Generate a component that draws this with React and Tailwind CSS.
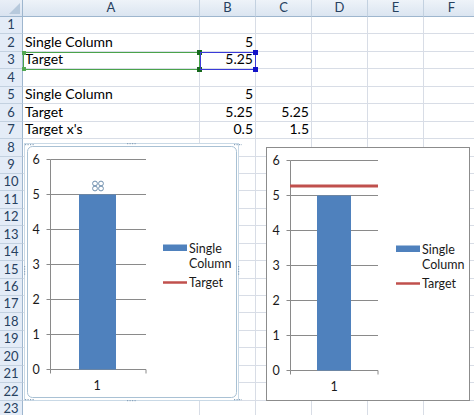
const cols = [
  { key: 'A', w: 177 },
  { key: 'B', w: 56 },
  { key: 'C', w: 56 },
  { key: 'D', w: 56 },
  { key: 'E', w: 56 },
  { key: 'F', w: 56 },
];

const data = {
  2: { A: 'Single Column', B: '5' },
  3: { A: 'Target', B: '5.25' },
  5: { A: 'Single Column', B: '5' },
  6: { A: 'Target', B: '5.25', C: '5.25' },
  7: { A: "Target x's", B: '0.5', C: '1.5' },
};

const rows = Array.from({ length: 23 }, (_, i) => i + 1);

function Axis({ x0, x1, y0, step, labelX }) {
  const ys = [0, 1, 2, 3, 4, 5, 6].map((v) => ({ v, y: y0 - v * step }));
  return (
    <g>
      {ys.map(({ v, y }) => (
        <g key={v}>
          {v > 0 && <line x1={x0} x2={x1} y1={y} y2={y} stroke="#8a8a8a" strokeWidth="1" />}
          <line x1={x0 - 4} x2={x0} y1={y} y2={y} stroke="#8a8a8a" strokeWidth="1" />
          <text x={labelX} y={y + 4.5} textAnchor="middle" fontSize="12.5" fill="#1a1a1a">{v}</text>
        </g>
      ))}
      <line x1={x0} x2={x0} y1={y0 - 6 * step} y2={y0} stroke="#8a8a8a" strokeWidth="1" />
      <line x1={x0} x2={x1} y1={y0} y2={y0} stroke="#8a8a8a" strokeWidth="1" />
      <line x1={x0} x2={x0} y1={y0} y2={y0 + 4} stroke="#8a8a8a" strokeWidth="1" />
      <line x1={x1} x2={x1} y1={y0} y2={y0 + 4} stroke="#8a8a8a" strokeWidth="1" />
    </g>
  );
}

function Legend({ x, y }) {
  return (
    <g fontSize="12.5" fill="#1a1a1a">
      <rect x={x} y={y} width="24" height="6.5" fill="#4f81bd" />
      <text x={x + 26} y={y + 8}>Single</text>
      <text x={x + 26} y={y + 23}>Column</text>
      <line x1={x} x2={x + 24} y1={y + 38} y2={y + 38} stroke="#c0504d" strokeWidth="2.5" />
      <text x={x + 26} y={y + 42.5}>Target</text>
    </g>
  );
}

function Dots({ x, y, vertical }) {
  return (
    <g fill="#8aa4bc">
      {[0, 1, 2, 3].map((i) => (
        <rect key={i} x={vertical ? x : x + i * 2.5} y={vertical ? y + i * 2.5 : y} width="1.2" height="1.2" />
      ))}
    </g>
  );
}

function ChartOne() {
  return (
    <svg className="absolute left-[22px] top-[141px]" width="220" height="263" viewBox="22 141 220 263" style={{ fontFamily: 'Lato, "Open Sans", sans-serif' }}>
      <rect x="24.5" y="143.5" width="214" height="257" fill="#ffffff" stroke="#c9d9e6" />
      <rect x="27.5" y="146.5" width="209" height="251" rx="5" fill="#ffffff" stroke="#a9c1d4" />
      <Dots x={127} y={143} />
      <Dots x={127} y={400} />
      <Dots x={24} y={266} vertical />
      <Dots x={238} y={266} vertical />
      <Dots x={25} y={144} />
      <Dots x={234} y={144} />
      <Dots x={25} y={399} />
      <Dots x={234} y={399} />
      <Axis x0={50.5} x1={146} y0={369.5} step={35} labelX={36} />
      <rect x="79" y="194.5" width="37" height="175" fill="#4f81bd" />
      <g fill="none" stroke="#6f8fae" strokeWidth="1">
        <circle cx="95" cy="183.5" r="2.4" />
        <circle cx="101" cy="183.5" r="2.4" />
        <circle cx="95" cy="188.5" r="2.4" />
        <circle cx="101" cy="188.5" r="2.4" />
      </g>
      <text x="97" y="389.5" textAnchor="middle" fontSize="12.5" fill="#1a1a1a">1</text>
      <Legend x={163} y={244.5} />
    </svg>
  );
}

function ChartTwo() {
  return (
    <svg className="absolute left-[265px] top-[146px]" width="206" height="256" viewBox="265 146 206 256" style={{ fontFamily: 'Lato, "Open Sans", sans-serif' }}>
      <rect x="266.5" y="147.5" width="203" height="253" fill="#ffffff" stroke="#8c8c8c" />
      <Axis x0={290.5} x1={378} y0={370.5} step={35} labelX={276} />
      <rect x="317" y="195.5" width="34" height="175" fill="#4f81bd" />
      <line x1="290" x2="378" y1="186" y2="186" stroke="#c0504d" strokeWidth="3" />
      <text x="334" y="391" textAnchor="middle" fontSize="12.5" fill="#1a1a1a">1</text>
      <Legend x={396} y={245.5} />
    </svg>
  );
}

export default function App() {
  return (
    <div className="relative w-[474px] h-[415px] overflow-hidden bg-white" style={{ fontFamily: 'Lato, "Open Sans", sans-serif' }}>
      <div className="grid grid-cols-[23px_177px_56px_56px_56px_56px_56px] grid-rows-[17px_repeat(23,17.45px)]">
        {/* corner */}
        <div className="relative bg-gradient-to-b from-[#e9eff7] to-[#d9e3f0] border-r border-b border-[#9eb6ce]">
          <div className="absolute right-[2px] bottom-[2px] w-0 h-0 border-l-[11px] border-l-transparent border-b-[11px] border-b-[#b7c9dc]" />
        </div>
        {cols.map((c) => (
          <div key={c.key} className="flex items-center justify-center bg-gradient-to-b from-[#eef3f9] to-[#dbe5f1] border-r border-b border-r-[#c3d1e0] border-b-[#9eb6ce] text-[13px] text-[#27415f]">
            {c.key}
          </div>
        ))}
        {rows.map((r) => (
          <div key={r} className="contents">
            <div className="flex items-center justify-center bg-[#e4ecf7] border-r border-b border-r-[#9eb6ce] border-b-[#c3d1e0] text-[13px] text-[#27415f]">
              {r}
            </div>
            {cols.map((c) => {
              const v = data[r]?.[c.key];
              return (
                <div
                  key={c.key}
                  className={`flex items-end pb-[1px] border-r border-b border-[#d8dde6] text-[14px] leading-[16px] text-black whitespace-nowrap ${c.key === 'A' ? 'justify-start pl-[2px]' : 'justify-end pr-[2px]'}`}
                >
                  {v}
                </div>
              );
            })}
          </div>
        ))}
      </div>

      {/* A3 green reference */}
      <div className="absolute left-[23px] top-[52px] w-[177px] h-[18px] border border-[#4aa34a]">
        <div className="absolute -left-[2px] -top-[2px] w-[4px] h-[4px] bg-[#52a852]" />
        <div className="absolute -left-[2px] -bottom-[2px] w-[4px] h-[4px] bg-[#52a852]" />
        <div className="absolute -right-[3px] -top-[3px] w-[5px] h-[5px] bg-[#16691c]" />
        <div className="absolute -right-[3px] -bottom-[3px] w-[5px] h-[5px] bg-[#16691c]" />
      </div>
      {/* B3 blue reference */}
      <div className="absolute left-[200px] top-[52px] w-[56px] h-[18px] border border-[#3a3ad8]">
        <div className="absolute -right-[3px] -top-[3px] w-[5px] h-[5px] bg-[#1212c8]" />
        <div className="absolute -right-[3px] -bottom-[3px] w-[5px] h-[5px] bg-[#1212c8]" />
      </div>

      <ChartOne />
      <ChartTwo />
    </div>
  );
}
